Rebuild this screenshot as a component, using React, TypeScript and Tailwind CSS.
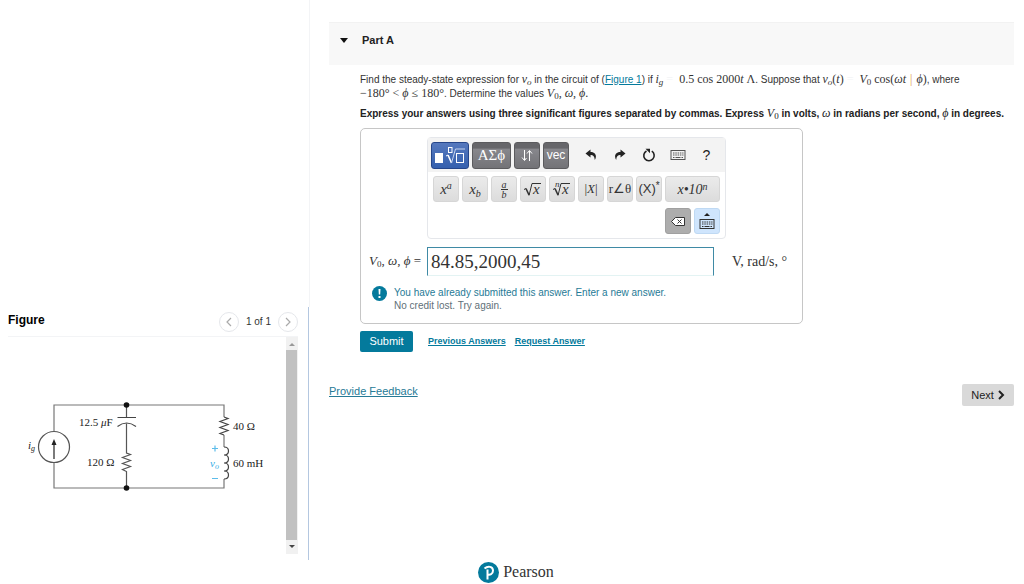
import type { ReactNode } from 'react'
import { clsx } from 'clsx'

const serif = "font-['Liberation_Serif',serif]"

function M({ children, className }: { children: ReactNode; className?: string }) {
  return <span className={clsx(serif, 'whitespace-nowrap font-normal leading-none', className ?? 'text-[12px]')}>{children}</span>
}

function Var({ name, sub }: { name: string; sub?: string }) {
  return (
    <>
      <i>{name}</i>
      {sub && <sub className="bottom-[-2px] text-[9px]">{sub === '0' ? sub : <i>{sub}</i>}</sub>}
    </>
  )
}

function Circuit() {
  return (
    <svg viewBox="8 337 278 217" className="h-[217px] min-w-0 flex-1" fill="none" stroke="#777" strokeWidth="1.2">
      <path d="M54 431V405H224V417M224 435V447" />
      <path d="M54 463V488H224V479" />
      <path d="M224 417l4 1.500-8 3 8 3-8 3 8 3-8 3 4 1.500" stroke="#444" />
      <path d="M224 447c6 0 6 8 0 8c6 0 6 8 0 8c6 0 6 8 0 8c6 0 6 8 0 8" stroke="#444" />
      <path d="M126.500 405V417.500M126.500 423.500V453l4 1.500-8 3 8 3-8 3 8 3-8 3 4 2V488" stroke="#555" />
      <path d="M117.500 417.500H136M117.500 426.500Q126.500 419.500 136 426.500" stroke="#444" />
      <circle cx="54" cy="447" r="15.500" stroke="#555" />
      <path d="M54 459V443" stroke="#222" />
      <path d="M54 439l-2.500 6h5z" fill="#222" stroke="none" />
      <circle cx="126.500" cy="405" r="2.800" fill="#111" stroke="none" />
      <circle cx="126.500" cy="488" r="2.800" fill="#111" stroke="none" />
      <g fill="#222" stroke="none" className={serif} fontSize="11">
        <text x="79" y="426">12.5 <tspan fontStyle="italic">μ</tspan>F</text>
        <text x="87" y="466">120 Ω</text>
        <text x="233" y="430">40 Ω</text>
        <text x="233" y="467">60 mH</text>
        <text x="28" y="449" fontStyle="italic">i<tspan dy="2" fontSize="8">g</tspan></text>
        <text x="210" y="467" fontStyle="italic" fill="#38aee6">v<tspan dy="2" fontSize="8">o</tspan></text>
      </g>
      <path d="M212 448.500H218M215 445.500V451.500M212 478.500H218" stroke="#5cbcea" />
    </svg>
  )
}

const pagerButton = 'flex size-5 items-center justify-center rounded-full border border-gray-200'

function FigurePanel() {
  return (
    <section className="mr-px border-r border-[#b4c7e0] pb-[6px]">
      <div className="ml-2 mr-[10px] flex h-[30px] items-center border-b border-gray-100">
        <h2 className="flex-1 pb-1 text-[12px] font-bold text-black">Figure</h2>
        <button aria-label="Previous figure" className={pagerButton}>
          <svg width="6" height="10" viewBox="0 0 6 10" fill="none" stroke="#aaa" strokeWidth="1.2"><path d="M5 1L1 5l4 4" /></svg>
        </button>
        <span className="mx-[7px] text-[10px] text-[#333]">1 of 1</span>
        <button aria-label="Next figure" className={pagerButton}>
          <svg width="6" height="10" viewBox="0 0 6 10" fill="none" stroke="#aaa" strokeWidth="1.2"><path d="M1 1l4 4-4 4" /></svg>
        </button>
      </div>
      <div className="ml-2 mr-[10px] flex">
        <Circuit />
        <div className="flex w-3 flex-col bg-[#f1f1f1]">
          <div className="flex h-[13px] items-center justify-center">
            <svg width="6" height="4" viewBox="0 0 6 4" fill="#999"><path d="M0 4l3-3 3 3z" /></svg>
          </div>
          <div className="mr-px flex-1 bg-[#c1c1c1]" />
          <div className="flex h-[14px] items-center justify-center">
            <svg width="6" height="4" viewBox="0 0 6 4" fill="#444"><path d="M0 0l3 3 3-3z" /></svg>
          </div>
        </div>
      </div>
    </section>
  )
}

const modeButton =
  'flex h-[27px] items-center justify-center rounded-[3px] border border-[#5b5b5e] bg-linear-to-b from-[#66666a] from-20% via-[#87878c] via-25% to-[#737377] text-white'

function Key({ label, wide, children }: { label: string; wide?: boolean; children: ReactNode }) {
  return (
    <button
      aria-label={label}
      className={clsx(
        serif,
        'flex h-[26px] items-center justify-center whitespace-nowrap rounded-[3px] border border-[#d6d6d6] bg-linear-to-b from-[#ebebeb] to-[#dcdcdc] text-[15px] text-[#333]',
        wide ? 'w-[55px]' : 'w-[26px]',
      )}
    >
      {children}
    </button>
  )
}

function Keyboard({ arrow }: { arrow?: boolean }) {
  return (
    <svg width="16" height={arrow ? 18 : 12} viewBox={arrow ? '0 -6 16 18' : '0 0 16 12'} fill="none" stroke={arrow ? '#333' : '#555'}>
      {arrow && <path d="M5 -2l3-3 3 3z" fill="#222" stroke="none" />}
      <rect x="1" y="1.500" width="14" height="9" />
      <path d="M3 4H13.500M3 6H13.500" strokeDasharray="1.500 .8" />
      <path d="M3 8.500H4.500M5.500 8.500H10.500M11.500 8.500H13" />
    </svg>
  )
}

function Radical({ index }: { index?: string }) {
  return (
    <svg width="22" height="22" viewBox="0 -2 22 22" fill="none" stroke="#333">
      <path d="M2 9.500l2-1" />
      <path d="M4 8.500l3 6.500" strokeWidth="1.600" />
      <path d="M7 15.500L10 3.500H19" />
      <g fontStyle="italic" fill="#333" stroke="none">
        <text x="11" y="14" fontSize="15">x</text>
        {index && <text x="4" y="7" fontSize="9">{index}</text>}
      </g>
    </svg>
  )
}

const toolIcon = 'flex w-[29px] items-center justify-center text-[#222]'

function MathToolbar() {
  return (
    <div className="w-[299px] rounded border border-gray-200 bg-white">
      <div className="flex h-[34px] items-center gap-[3px] bg-[#f3f3f3] pl-[3px]">
        <button aria-label="Templates" className="flex h-[27px] w-[38px] items-center justify-center rounded-[3px] border border-[#26468a] bg-linear-to-b from-[#5578bd] to-[#3560ae]">
          <svg width="32" height="22" viewBox="0 0 32 22" fill="none" stroke="#fff">
            <rect x="1" y="9" width="8" height="10" fill="#fff" stroke="none" />
            <path d="M12 12l2-1" />
            <path d="M14 11l3.500 8" strokeWidth="1.600" />
            <path d="M17.500 19L21.500 5H31" stroke="#c5d3ee" />
            <rect x="14.500" y="3.500" width="3.500" height="5" />
            <rect x="22.500" y="9.500" width="7" height="9" />
          </svg>
        </button>
        <button className={clsx(modeButton, serif, 'w-[39px] text-[15px]')}>ΑΣϕ</button>
        <button aria-label="Arrows" className={clsx(modeButton, 'w-[26px]')}>
          <svg width="12" height="13" viewBox="0 0 12 13" fill="none" stroke="#fff"><path d="M3.500 1V11M1 8.500L3.500 11.500 5.500 9M8.500 12V2M6 4.500L8.500 1.500 11 4.500" /></svg>
        </button>
        <button className={clsx(modeButton, 'w-[26px] text-[12px]')}>vec</button>
        <div className="ml-1 flex h-full">
          <button aria-label="Undo" className={toolIcon}>
            <svg width="12" height="12" viewBox="0 0 12 12" fill="currentColor"><path d="M5.500 0.500L0.500 4.500l5 4V6C8 6 9.500 7 9.800 11 12.500 6.500 10 3 5.500 3z" /></svg>
          </button>
          <button aria-label="Redo" className={toolIcon}>
            <svg width="12" height="12" viewBox="0 0 12 12" fill="currentColor"><path d="M6.500 0.500l5 4-5 4V6C4 6 2.500 7 2.200 11-.500 6.500 2 3 6.500 3z" /></svg>
          </button>
          <button aria-label="Reset" className={toolIcon}>
            <svg width="14" height="14" viewBox="0 0 14 14" fill="none" stroke="currentColor" strokeWidth="1.600"><path d="M9.800 3.200A5.200 5.200 0 1 1 4.500 3" /><path d="M3.500 .800H8V5.200z" fill="currentColor" stroke="none" /></svg>
          </button>
          <button aria-label="Keyboard shortcuts" className={toolIcon}><Keyboard /></button>
          <button aria-label="Help" className={clsx(toolIcon, 'text-[14px]')}>?</button>
        </div>
      </div>
      <div className="flex flex-col gap-[6px] px-[5px] py-1">
        <div className="flex justify-between">
          <Key label="Superscript"><i>x<sup className="top-[-5px] text-[10px]">a</sup></i></Key>
          <Key label="Subscript"><i>x<sub className="bottom-[-3px] text-[10px]">b</sub></i></Key>
          <Key label="Fraction">
            <i className="flex flex-col text-[10px] leading-[9px]"><span className="border-b border-[#333] px-px">a</span><span>b</span></i>
          </Key>
          <Key label="Square root"><Radical /></Key>
          <Key label="Nth root"><Radical index="n" /></Key>
          <Key label="Absolute value"><span className="text-[13px]">|<i>X</i>|</span></Key>
          <Key label="Polar form"><span className="text-[13px]">r∠θ</span></Key>
          <Key label="Conjugate"><span className="font-['Liberation_Sans',sans-serif] text-[13px]">(X)<sup className="top-[-4px] text-[10px]">*</sup></span></Key>
          <Key label="Scientific notation" wide><i className="text-[14px]">x•10<sup className="top-[-4px] text-[10px]">n</sup></i></Key>
        </div>
        <div className="flex justify-end gap-[3px]">
          <button aria-label="Delete" className="flex h-[26px] w-[26px] items-center justify-center rounded-[3px] border border-[#a0a0a0] bg-[#adadad]">
            <svg width="14" height="9" viewBox="0 0 14 9" fill="#fff" stroke="#333"><path d="M4.500 .500H13.500V8.500H4.500L.500 4.500z" /><path d="M6.500 2.500l4 4M10.500 2.500l-4 4" /></svg>
          </button>
          <button aria-label="Hide keyboard" className="flex h-[26px] w-[26px] items-center justify-center rounded-[3px] border border-[#bfd9f3] bg-[#cfe5fd]"><Keyboard arrow /></button>
        </div>
      </div>
    </div>
  )
}

function AnswerBox() {
  return (
    <div className="mt-[7px] w-[443px] rounded-[5px] border border-[#c6c6c6] pb-[11px] pt-2">
      <div className="pl-[66px]"><MathToolbar /></div>
      <div className="mt-2 flex items-center">
        <label htmlFor="answer" className="w-[66px] pl-2">
          <M className="text-[13px]"><Var name="V" sub="0" />, <i>ω</i>, <i>ϕ</i> =</M>
        </label>
        <input
          id="answer"
          defaultValue="84.85,2000,45"
          className={clsx(serif, 'h-[29px] w-[287px] border border-[#3f8aa5] border-b-[#e3f3f3] pl-[3px] text-[19px] text-[#333]')}
        />
        <M className="ml-[18px] text-[14px]">V, rad/s, °</M>
      </div>
      <div className="mt-[10px] flex pl-[11px]">
        <svg width="15" height="15" viewBox="0 0 15 15" className="mr-[7px]">
          <circle cx="7.500" cy="7.500" r="7.500" fill="#047a9c" />
          <path d="M6.500 3h2l-.300 5.500H6.800zM6.500 10h2v2h-2z" fill="#fff" />
        </svg>
        <p className="leading-[13px] text-[#267a96]">
          You have already submitted this answer. Enter a new answer.
          <br />
          <span className="text-[#5f7078]">No credit lost. Try again.</span>
        </p>
      </div>
    </div>
  )
}

function PartA() {
  return (
    <main className="min-w-0 flex-1 pl-[19px] pr-[10px] pt-[22px]">
      <header className="flex h-[43px] items-start border-t border-[#f2f2f2] bg-[#f8f8f8] pt-[10px]">
        <button className="flex items-center gap-[14px] pl-[11px] text-[11px] font-bold leading-[14px] text-[#222]">
          <svg width="8" height="5" viewBox="0 0 8 5" fill="#111"><path d="M0 0h8L4 5z" /></svg>
          Part A
        </button>
      </header>
      <div className="pl-[31px] pt-2">
        <p className="leading-[14px]">
          Find the steady-state expression for <M><Var name="v" sub="o" /></M> in the circuit of (
          <a href="#figure" className="text-[#047a9c] underline">Figure 1</a>) if{' '}
          <M><Var name="i" sub="g" /><span className="mx-[3px] text-gray-100">=</span> 0.5 cos 2000<i>t</i> Λ</M>. Suppose that{' '}
          <M><Var name="v" sub="o" />(<i>t</i>)<span className="mx-[3px] text-gray-100">=</span> <Var name="V" sub="0" /> cos(<i>ωt</i> <span className="mx-px text-[#e09a40]">|</span> <i>ϕ</i>)</M>, where{' '}
          <M>−180° &lt; <i>ϕ</i> ≤ 180°</M>. Determine the values <M><Var name="V" sub="0" />, <i>ω</i>, <i>ϕ</i>.</M>
        </p>
        <p className="mt-[6px] font-bold leading-[14px] text-[#222]">
          Express your answers using three significant figures separated by commas. Express <M><Var name="V" sub="0" /></M> in volts, <M><i>ω</i></M> in radians per second, <M><i>ϕ</i></M> in degrees.
        </p>
        <AnswerBox />
        <div className="mt-[7px] flex items-center">
          <button className="h-[21px] w-[53px] rounded-[2px] bg-[#047a9c] text-[11px] text-white">Submit</button>
          <a href="#previous" className="ml-[15px] text-[9px] font-bold text-[#047a9c] underline">Previous Answers</a>
          <a href="#request" className="ml-[9px] text-[9px] font-bold text-[#047a9c] underline">Request Answer</a>
        </div>
      </div>
      <div className="mt-8 flex items-start justify-between">
        <a href="#feedback" className="text-[11px] leading-[14px] text-[#267a96] underline">Provide Feedback</a>
        <button className="flex h-[22px] w-[52px] items-center justify-center gap-1 rounded-[2px] bg-[#d9d9d9] text-[11px] text-[#222]">
          Next
          <svg width="7" height="10" viewBox="0 0 7 10" fill="none" stroke="#222" strokeWidth="2"><path d="M1 1l4 4-4 4" /></svg>
        </button>
      </div>
    </main>
  )
}

export default function App() {
  return (
    <div className="flex min-h-screen flex-col bg-white font-['Liberation_Sans',sans-serif] text-[10px] text-[#333]">
      <div className="flex flex-1">
        <aside className="flex w-[310px] shrink-0 flex-col">
          <div className="flex-1 border-r border-gray-100" />
          <FigurePanel />
        </aside>
        <PartA />
      </div>
      <footer className="flex h-6 items-center justify-center gap-1 pl-2">
        <svg width="21" height="21" viewBox="0 0 21 21">
          <circle cx="10.500" cy="10.500" r="10.500" fill="#047a9c" />
          <path d="M6.500 6.500C10 3.500 15 4.500 15 8.500S12 13 9.500 12.500M9.500 7.500V17.500" fill="none" stroke="#fff" strokeWidth="2" />
        </svg>
        <span className={clsx(serif, 'text-[16px] text-[#333]')}>Pearson</span>
      </footer>
    </div>
  )
}
